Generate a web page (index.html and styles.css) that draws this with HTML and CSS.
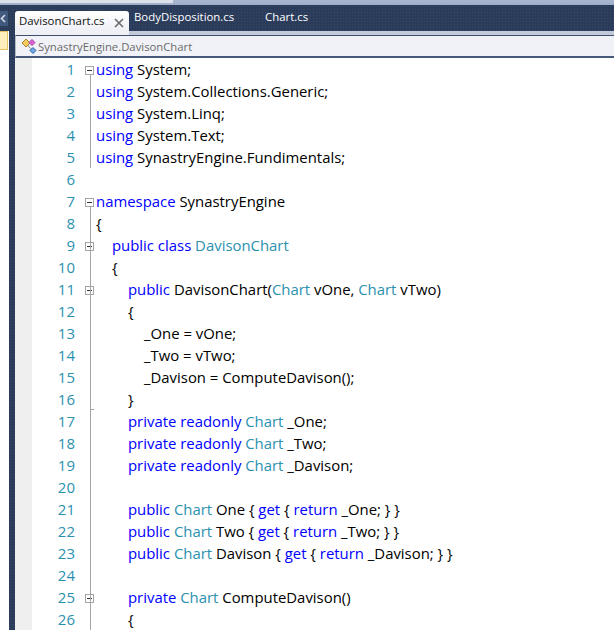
FILE: index.html
```html
<!DOCTYPE html>
<html lang="en">
<head>
  <meta charset="UTF-8">
  <title>DavisonChart.cs</title>
  <link rel="stylesheet" href="styles.css">
</head>
<body>
  <div class="top-strip"><div class="top-strip-left"></div></div>

  <div class="main">
    <div class="side">
      <div class="side-head">
        <div class="side-tab">
          <svg width="6" height="9" viewBox="0 0 6 9"><path d="M5 1L1.500 4.500 5 8" stroke="#d4dbe6" stroke-width="1.6" fill="none"/></svg>
        </div>
      </div>
      <div class="side-item"></div>
    </div>

    <div class="document">
      <div class="tabs">
        <div class="tab active">DavisonChart.cs
          <svg class="tab-close" width="10" height="10" viewBox="0 0 10 10"><path d="M1 1l8 8M9 1l-8 8" stroke="#6d6d6d" stroke-width="1.7" fill="none"/></svg>
        </div>
        <div class="tab body-tab">BodyDisposition.cs</div>
        <div class="tab chart-tab">Chart.cs</div>
      </div>

      <div class="nav-wrap">
        <div class="nav-bar">
          <svg class="class-icon" width="17" height="17" viewBox="0 0 17 17">
            <path d="M10 10v3h3M6 6l3 4" stroke="#8a8a8a" fill="none"/>
            <path d="M1 5l4-4 4 4-4 4z" fill="#f4cc60" stroke="#a8842a"/>
            <path d="M8 4.500l3-3 3 3-3 3z" fill="#e060d8" stroke="#a040a0"/>
            <path d="M9 12.500l3-3 3 3-3 3z" fill="#70a8e8" stroke="#2f68a8"/>
          </svg>
          SynastryEngine.DavisonChart
        </div>
      </div>

      <div class="editor">
        <div class="selection-margin"></div>
        <div class="line-numbers" id="numbers"></div>
        <div class="outline">
          <div class="fold-line first"></div>
          <div class="fold-box row-1"></div>
          <div class="fold-box row-7"></div>
          <div class="fold-box row-9"></div>
          <div class="fold-box row-11"></div>
          <div class="fold-box row-25"></div>
          <div class="fold-line second"></div>
          <div class="fold-end"></div>
        </div>
        <div class="code">
          <div class="line"><span class="k">using</span> System;</div>
          <div class="line"><span class="k">using</span> System.Collections.Generic;</div>
          <div class="line"><span class="k">using</span> System.Linq;</div>
          <div class="line"><span class="k">using</span> System.Text;</div>
          <div class="line"><span class="k">using</span> SynastryEngine.Fundimentals;</div>
          <div class="line"></div>
          <div class="line"><span class="k">namespace</span> SynastryEngine</div>
          <div class="line">{</div>
          <div class="line i1"><span class="k">public class</span> <span class="t">DavisonChart</span></div>
          <div class="line i1">{</div>
          <div class="line i2"><span class="k">public</span> DavisonChart(<span class="t">Chart</span> vOne, <span class="t">Chart</span> vTwo)</div>
          <div class="line i2">{</div>
          <div class="line i3">_One = vOne;</div>
          <div class="line i3">_Two = vTwo;</div>
          <div class="line i3">_Davison = ComputeDavison();</div>
          <div class="line i2">}</div>
          <div class="line i2"><span class="k">private readonly</span> <span class="t">Chart</span> _One;</div>
          <div class="line i2"><span class="k">private readonly</span> <span class="t">Chart</span> _Two;</div>
          <div class="line i2"><span class="k">private readonly</span> <span class="t">Chart</span> _Davison;</div>
          <div class="line"></div>
          <div class="line i2"><span class="k">public</span> <span class="t">Chart</span> One { <span class="k">get</span> { <span class="k">return</span> _One; } }</div>
          <div class="line i2"><span class="k">public</span> <span class="t">Chart</span> Two { <span class="k">get</span> { <span class="k">return</span> _Two; } }</div>
          <div class="line i2"><span class="k">public</span> <span class="t">Chart</span> Davison { <span class="k">get</span> { <span class="k">return</span> _Davison; } }</div>
          <div class="line"></div>
          <div class="line i2"><span class="k">private</span> <span class="t">Chart</span> ComputeDavison()</div>
          <div class="line i2">{</div>
        </div>
      </div>
    </div>
  </div>

  <script>
    const numbers = document.getElementById('numbers');
    for (let i = 1; i <= 26; i++) {
      const row = document.createElement('div');
      row.textContent = i;
      numbers.appendChild(row);
    }
  </script>
</body>
</html>
```

FILE: styles.css
```css
* {
    box-sizing: border-box;
}

html, body {
    margin: 0;
    padding: 0;
    height: 630px;
    overflow: hidden;
    background: #ffffff;
    font-family: "Open Sans", "Noto Sans", sans-serif;
}

.top-strip {
    height: 5px;
    background: linear-gradient(#a9b7d0, #9fadc8);
}

.top-strip-left {
    width: 173px;
    height: 3px;
    background: #dde1e9;
}

.main {
    display: flex;
    height: 625px;
}

.side {
    width: 9px;
    flex: none;
    background: #ffffff;
}

.side-head {
    height: 26px;
    padding-top: 6px;
    padding-bottom: 5px;
    background-color: #2b3b5a;
    background-image: radial-gradient(#36486c 1px, transparent 1px);
    background-size: 3px 3px;
}

.side-tab {
    height: 15px;
    width: 8px;
    background: #40597d;
    display: flex;
    align-items: center;
}

.side-item {
    width: 8px;
    height: 19px;
    background: #fdeebb;
    border: 1px solid #e5c365;
    border-left: 0;
}

.document {
    flex: 1;
    min-width: 0;
    background-color: #2b3b5a;
    background-image: radial-gradient(#36486c 1px, transparent 1px);
    background-size: 3px 3px;
    padding-left: 6px;
    display: flex;
    flex-direction: column;
}

.tabs {
    height: 26px;
    display: flex;
    align-items: flex-end;
    flex: none;
}

.tab {
    height: 26px;
    color: #ffffff;
    font-size: 11.4px;
    line-height: 24px;
    flex: none;
}

.tab.active {
    width: 114px;
    padding-left: 4px;
    margin-top: 6px;
    height: 20px;
    line-height: 20px;
    color: #111111;
    background: linear-gradient(#ffffff, #eef0f6);
    border-radius: 3px 3px 0 0;
    position: relative;
}

.tab-close {
    position: absolute;
    right: 5px;
    top: 7px;
}

.body-tab {
    width: 136px;
    padding-left: 5px;
}

.nav-wrap {
    flex: none;
    background: linear-gradient(to right, #eef0f6 114px, #c2cad9 114px);
    padding-top: 4px;
}

.nav-bar {
    height: 23px;
    background: #f1f2f7;
    border-top: 1px solid #3f4f6e;
    border-bottom: 2px solid #47597b;
    border-left: 1px solid #b5bccb;
    display: flex;
    align-items: center;
    padding-left: 5px;
    font-size: 11.3px;
    color: #6a6a6a;
}

.class-icon {
    flex: none;
}

.editor {
    flex: 1;
    display: flex;
    background: #ffffff;
    overflow: hidden;
}

.selection-margin {
    width: 17px;
    flex: none;
    background: #efefef;
}

.line-numbers {
    width: 43px;
    flex: none;
    text-align: right;
    color: #2b91af;
    font-size: 15px;
    line-height: 22px;
}

.outline {
    width: 21px;
    flex: none;
    position: relative;
}

.fold-line {
    position: absolute;
    left: 15px;
    width: 1px;
    background: #a5a5a5;
}

.fold-line.first {
    top: 16px;
    height: 94px;
}

.fold-line.second {
    top: 148px;
    height: 440px;
}

.fold-end {
    position: absolute;
    left: 15px;
    top: 351px;
    width: 4px;
    height: 1px;
    background: #a5a5a5;
}

.fold-box {
    position: absolute;
    left: 10px;
    width: 9px;
    height: 9px;
    background: #ffffff;
    border: 1px solid #a5a5a5;
}

.fold-box::after {
    content: "";
    position: absolute;
    left: 1px;
    top: 3px;
    width: 5px;
    height: 1px;
    background: #333333;
}

.row-1 { top: 8px; }
.row-7 { top: 140px; }
.row-9 { top: 184px; }
.row-11 { top: 228px; }
.row-25 { top: 536px; }

.code {
    flex: 1;
    font-size: 14.9px;
    color: #000000;
}

.line {
    height: 22px;
    line-height: 22px;
    white-space: nowrap;
}

.k {
    color: #0000ff;
}

.t {
    color: #2b91af;
}

.i1 { padding-left: 16px; }
.i2 { padding-left: 32px; }
.i3 { padding-left: 48px; }
```
